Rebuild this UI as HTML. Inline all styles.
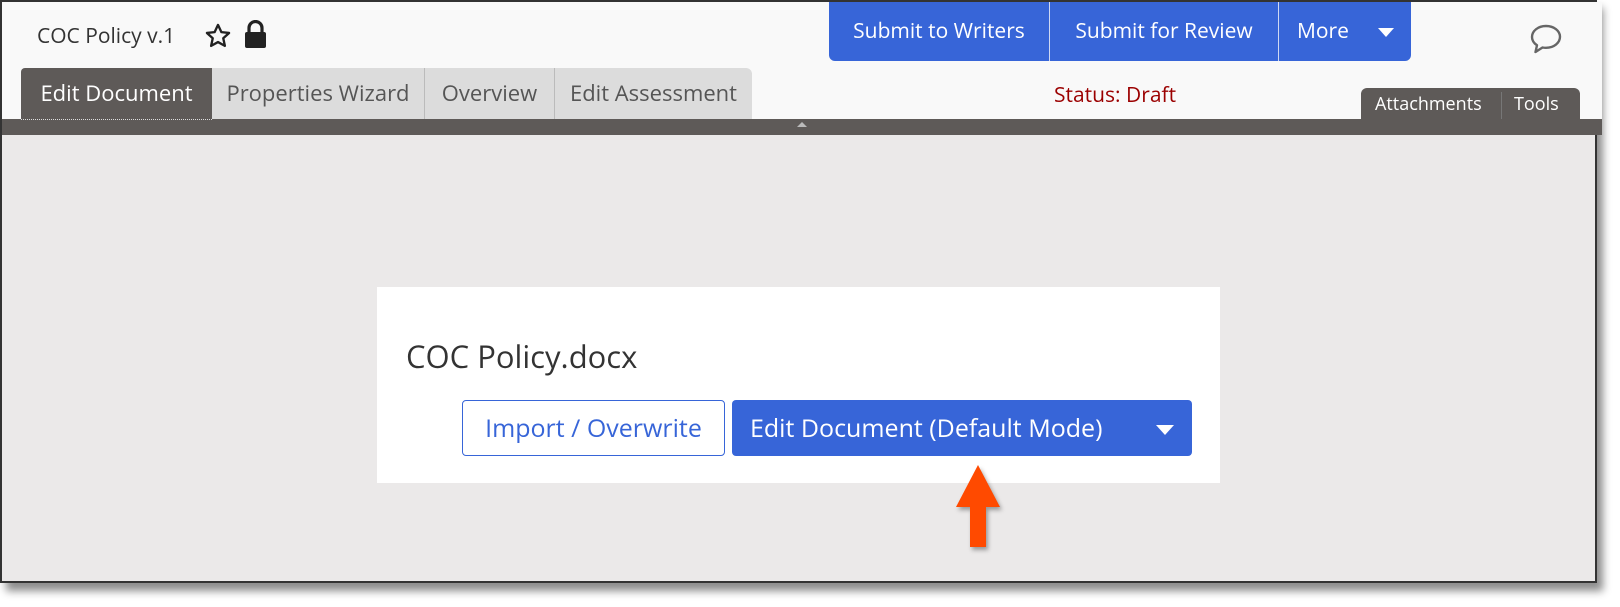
<!DOCTYPE html>
<html><head><style>
*{margin:0;padding:0;box-sizing:border-box}
body{width:1620px;height:607px;background:#fff;font-family:"Open Sans","Liberation Sans",sans-serif;position:relative;overflow:hidden}
.frame{position:absolute;left:0;top:0;width:1597px;height:583px;border:2px solid #333;background:#ebe9e9;box-shadow:6px 8px 8px rgba(0,0,0,.45)}
.hdr{position:absolute;left:0;top:0;width:1600px;height:117px;background:#f9f9f9}
.bar{position:absolute;left:0;top:117px;width:1600px;height:16px;background:#5e5a58}
.abs{position:absolute;white-space:nowrap}
.tab{position:absolute;top:66px;height:51px;line-height:51px;font-size:22px;color:#555;background:#dcdcdc;text-align:center}
.btn{position:absolute;top:0;height:59px;line-height:59px;color:#fff;font-size:21px;background:#3765d8;text-align:center}
</style></head><body>
<div class="frame">
<div class="hdr"></div>
<div class="bar"></div>
<div class="abs" style="left:35px;top:18px;font-size:21px;color:#333;line-height:32px">COC Policy v.1</div>
<svg class="abs" style="left:202px;top:20px" width="28" height="28" viewBox="0 0 24 24"><path d="M12 2.5l2.9 6.2 6.6.7-5 4.5 1.4 6.6L12 17.2 6.1 20.5l1.4-6.6-5-4.5 6.6-.7z" fill="none" stroke="#222" stroke-width="2" stroke-linejoin="round"/></svg>
<svg class="abs" style="left:241px;top:18px" width="25" height="29" viewBox="0 0 25 29"><path d="M6 13V8a6.5 6.5 0 0 1 13 0v5" fill="none" stroke="#222" stroke-width="3.2"/><rect x="2" y="12" width="21" height="16" rx="2" fill="#222"/></svg>
<div class="tab" style="left:19px;width:191px;background:#5e5a58;color:#fff;border-radius:4px 0 0 0">Edit Document</div>
<div class="abs" style="left:19px;top:117px;width:191px;border-top:1px dotted #ddd"></div>
<div class="tab" style="left:210px;width:212px">Properties Wizard</div>
<div class="tab" style="left:422px;width:130px;border-left:1px solid #bbb">Overview</div>
<div class="tab" style="left:552px;width:198px;border-left:1px solid #bbb;border-radius:0 6px 0 0">Edit Assessment</div>
<div class="abs" style="left:795px;top:120px;width:0;height:0;border-left:5px solid transparent;border-right:5px solid transparent;border-bottom:5px solid #bbb"></div>
<div class="btn" style="left:827px;width:220px;border-radius:0 0 0 6px">Submit to Writers</div>
<div class="btn" style="left:1048px;width:228px">Submit for Review</div>
<div class="btn" style="left:1277px;width:132px;border-radius:0 0 6px 0;text-align:left;padding-left:18px">More<span style="position:absolute;left:99px;top:26px;border-left:8px solid transparent;border-right:8px solid transparent;border-top:9px solid #fff"></span></div>
<div class="abs" style="left:1047px;top:0;width:1px;height:59px;background:#cfd8f3"></div>
<div class="abs" style="left:1276px;top:0;width:1px;height:59px;background:#cfd8f3"></div>
<svg class="abs" style="left:1527px;top:21px" width="34" height="32" viewBox="0 0 34 32"><path d="M17 3C9 3 3 8 3 14c0 3.5 2 6.3 5 8.3L6.5 29l7-4.5c1.1.2 2.3.3 3.5.3 8 0 14-5 14-11S25 3 17 3z" fill="none" stroke="#666" stroke-width="2.4" stroke-linejoin="round"/></svg>
<div class="abs" style="left:1052px;top:78px;font-size:21px;color:#9b0000;line-height:30px">Status: Draft</div>
<div class="abs" style="left:1359px;top:86px;width:219px;height:31px;background:#5e5a58;border-radius:6px 6px 0 0"></div>
<div class="abs" style="left:1373px;top:88px;font-size:18px;color:#fff;line-height:29px">Attachments</div>
<div class="abs" style="left:1499px;top:90px;width:1px;height:27px;background:#777"></div>
<div class="abs" style="left:1512px;top:88px;font-size:18px;color:#fff;line-height:29px">Tools</div>
<div class="abs" style="left:375px;top:285px;width:843px;height:196px;background:#fff"></div>
<div class="abs" style="left:404px;top:334px;font-size:31px;color:#333;line-height:42px">COC Policy.docx</div>
<div class="abs" style="left:460px;top:398px;width:263px;height:56px;border:1px solid #3765d8;border-radius:4px;color:#3765d8;font-size:25px;line-height:54px;text-align:center">Import / Overwrite</div>
<div class="abs" style="left:730px;top:398px;width:460px;height:56px;background:#3765d8;border-radius:4px;color:#fff;font-size:25px;line-height:56px;padding-left:18px">Edit Document (Default Mode)<span style="position:absolute;left:424px;top:25px;border-left:9px solid transparent;border-right:9px solid transparent;border-top:10px solid #fff"></span></div>
<svg class="abs" style="left:951px;top:461px;filter:drop-shadow(2px 3px 2px rgba(0,0,0,.35))" width="50" height="90" viewBox="0 0 50 90"><path d="M25 2L47 44H33V84H17V44H3z" fill="#ff4a00"/></svg>
</div>
</body></html>
